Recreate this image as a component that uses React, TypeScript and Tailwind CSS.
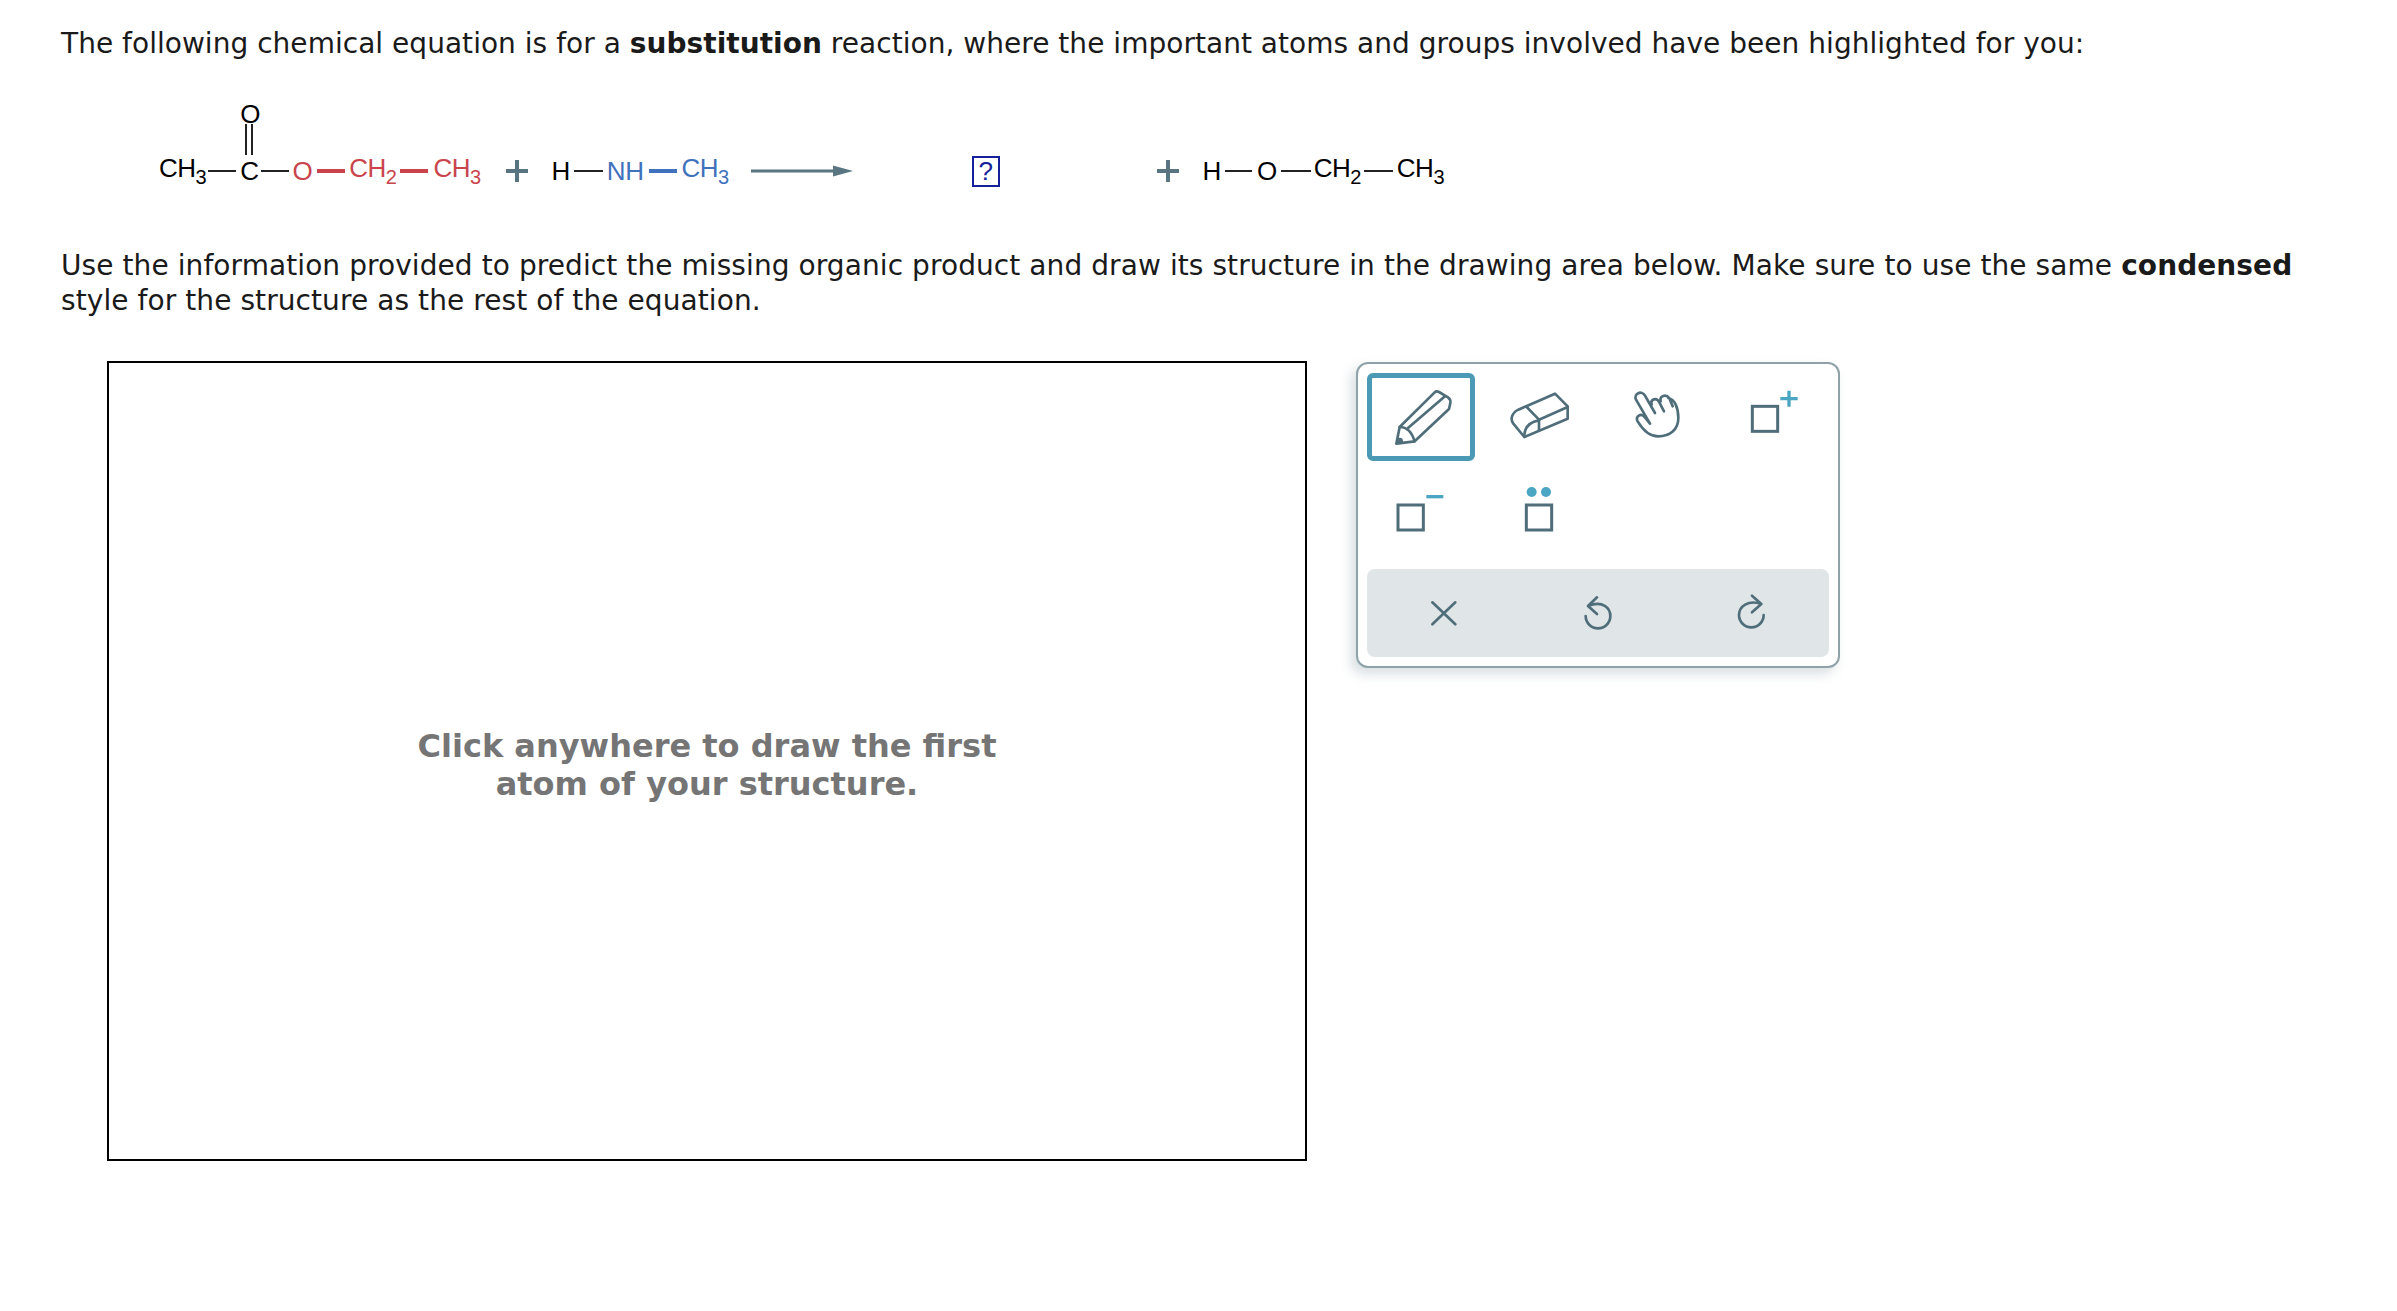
import React from 'react';

const ink = '#506e7a';
const teal = '#4ba6c4';

const Bond: React.FC<{ className: string }> = ({ className }) => <div className={`h-[2px] shrink-0 ${className}`} />;

const Sub: React.FC<{ children: React.ReactNode }> = ({ children }) => (
  <span className="text-[20px] leading-none align-[-7px]">{children}</span>
);

const Plus: React.FC<{ className?: string }> = ({ className }) => (
  <svg width="24" height="24" viewBox="0 0 24 24" className={`shrink-0 ${className ?? ''}`}>
    <path d="M12 1V23M1 12H23" stroke="#5a7582" strokeWidth="4" />
  </svg>
);

const Equation: React.FC = () => (
  <div className="mt-[85px] ml-[98px] h-[50px] flex items-center text-[26px] tracking-[-0.5px] leading-none text-black font-['Liberation_Sans',Arial,sans-serif] whitespace-nowrap">
    <span>CH<Sub>3</Sub></span>
    <Bond className="w-[28px] ml-[2px] bg-[#222]" />
    <span className="relative ml-[4px]">
      C
      <span className="absolute left-0 top-[-57px]">O</span>
      <span className="absolute left-[5px] top-[-34px] h-[31px] w-[8px] border-x-2 border-[#222]" />
    </span>
    <Bond className="w-[28px] ml-[3px] bg-[#222]" />
    <span className="ml-[3px] text-[#c9444c]">O</span>
    <Bond className="w-[28px] ml-[5px] h-[4px] bg-[#c9444c]" />
    <span className="ml-[4px] text-[#c9444c]">CH<Sub>2</Sub></span>
    <Bond className="w-[28px] ml-[4px] h-[4px] bg-[#c9444c]" />
    <span className="ml-[5px] text-[#c9444c]">CH<Sub>3</Sub></span>
    <Plus className="ml-[24px]" />
    <span className="ml-[23px]">H</span>
    <Bond className="w-[29px] ml-[4px] bg-[#222]" />
    <span className="ml-[4px] text-[#3f71bd]">NH</span>
    <Bond className="w-[28px] ml-[6px] h-[4px] bg-[#3f71bd]" />
    <span className="ml-[4px] text-[#3f71bd]">CH<Sub>3</Sub></span>
    <svg width="102" height="14" viewBox="0 0 102 14" className="ml-[22px] shrink-0">
      <path d="M0 7H84" stroke="#5a7582" strokeWidth="3" />
      <path d="M82 1.5L102 7L82 12.5Z" fill="#5a7582" />
    </svg>
    <div className="ml-[119px] w-[28px] h-[31px] shrink-0 border-2 border-[#16209a] flex items-center justify-center text-[#16209a] text-[26px] tracking-normal">?</div>
    <Plus className="ml-[156px]" />
    <span className="ml-[23px]">H</span>
    <Bond className="w-[27px] ml-[4px] bg-[#222]" />
    <span className="ml-[5px]">O</span>
    <Bond className="w-[30px] ml-[4px] bg-[#222]" />
    <span className="ml-[3px]">CH<Sub>2</Sub></span>
    <Bond className="w-[29px] ml-[3px] bg-[#222]" />
    <span className="ml-[4px]">CH<Sub>3</Sub></span>
  </div>
);

const ToolIcon: React.FC<{ box: string; children: React.ReactNode }> = ({ box, children }) => (
  <svg viewBox={box} className="absolute inset-0 w-full h-full" fill="none" stroke={ink} strokeWidth="8" strokeLinecap="round" strokeLinejoin="round">
    {children}
  </svg>
);

const Tool: React.FC<{ box: string; active?: boolean; children: React.ReactNode }> = ({ box, active, children }) => (
  <div className={`relative h-[88px] rounded-[6px] ${active ? 'outline-[5px] -outline-offset-[5px] outline-[#4a9ab5]' : ''}`}>
    <ToolIcon box={box}>{children}</ToolIcon>
  </div>
);

const ToolPanel: React.FC = () => (
  <div className="self-start w-[484px] h-[306px] mt-[1px] ml-[49px] p-[9px] bg-white border-2 border-[#8fa2a9] rounded-[12px] shadow-[-5px_6px_12px_rgba(80,110,122,0.22)]">
    <div className="grid grid-cols-4 gap-[10px]">
      <Tool box="82 70 324 264" active>
        <path d="M170 282L180 232L285 128Q290 123 298 127L325 143Q334 150 332 160L328 178L225 275Z" />
        <path d="M180 232Q212 232 225 275M205 235L316 140" />
        <circle cx="180" cy="274" r="10" fill={ink} stroke="none" />
      </Tool>
      <Tool box="435 70 324 264">
        <path d="M515 205Q518 188 535 180L645 132L683 170V207L553 262L520 222Q514 214 515 205Z" />
        <path d="M560 172L597 210L683 172M597 210V243M553 262Q552 220 597 212" />
      </Tool>
      <Tool box="789 70 324 264">
        <path d="M930 222L888 150C880 132 905 120 915 138L945 190M935 165C930 148 950 142 958 158L972 185M962 155C958 138 978 132 988 146L998 170M985 145C1005 150 1015 175 1015 205C1015 240 990 260 955 260C925 260 905 235 893 215C885 200 903 188 915 203L930 222" />
      </Tool>
      <Tool box="1143 70 324 264">
        <rect x="1237" y="170" width="76" height="75" strokeWidth="9" strokeLinecap="butt" strokeLinejoin="miter" />
        <path d="M1347 123V171M1321 147H1373" stroke={teal} strokeWidth="10" strokeLinecap="butt" />
      </Tool>
      <Tool box="82 363 324 264">
        <rect x="175" y="465" width="76" height="75" strokeWidth="9" strokeLinecap="butt" strokeLinejoin="miter" />
        <path d="M260 440H311" stroke={teal} strokeWidth="10" strokeLinecap="butt" />
      </Tool>
      <Tool box="435 363 324 264">
        <rect x="559" y="465" width="76" height="75" strokeWidth="9" strokeLinecap="butt" strokeLinejoin="miter" />
        <circle cx="575" cy="426" r="15" fill={teal} stroke="none" />
        <circle cx="618" cy="426" r="15" fill={teal} stroke="none" />
      </Tool>
    </div>
    <div className="mt-[10px] h-[88px] grid grid-cols-3 bg-[#e0e5e8] rounded-[8px]">
      <div className="relative">
        <ToolIcon box="82 657 462 264"><path d="M278 757L347 823M347 757L278 823" /></ToolIcon>
      </div>
      <div className="relative">
        <ToolIcon box="544 657 462 264"><path d="M772 742L745 768L772 792M745 768C790 750 812 775 812 798A37 37 0 1 1 738 798" /></ToolIcon>
      </div>
      <div className="relative">
        <ToolIcon box="1006 657 462 264"><path d="M1237 737L1265 762L1237 787M1265 762C1225 748 1198 770 1198 795A37 37 0 1 0 1272 795" /></ToolIcon>
      </div>
    </div>
  </div>
);

const App: React.FC = () => (
  <div className="min-h-[1311px] bg-white pt-[26px] pl-[61px] font-['DejaVu_Sans',Verdana,sans-serif] text-[#1a1a1a] text-[28px] leading-[35px]">
    <p className="whitespace-nowrap tracking-[0.03px]">
      The following chemical equation is for a <b>substitution</b> reaction, where the important atoms and groups involved have been highlighted for you:
    </p>
    <Equation />
    <p className="mt-[52px] w-[2260px] tracking-[0.08px]">
      Use the information provided to predict the missing organic product and draw its structure in the drawing area below. Make sure to use the same <b>condensed</b> style for the structure as the rest of the equation.
    </p>
    <div className="mt-[43px] ml-[46px] flex">
      <div className="w-[1200px] h-[800px] shrink-0 pt-[8px] border-2 border-black flex items-center justify-center text-center font-bold text-[32px] leading-[38px] text-[#757575]">
        <div>
          Click anywhere to draw the first<br />atom of your structure.
        </div>
      </div>
      <ToolPanel />
    </div>
  </div>
);

export default App;
